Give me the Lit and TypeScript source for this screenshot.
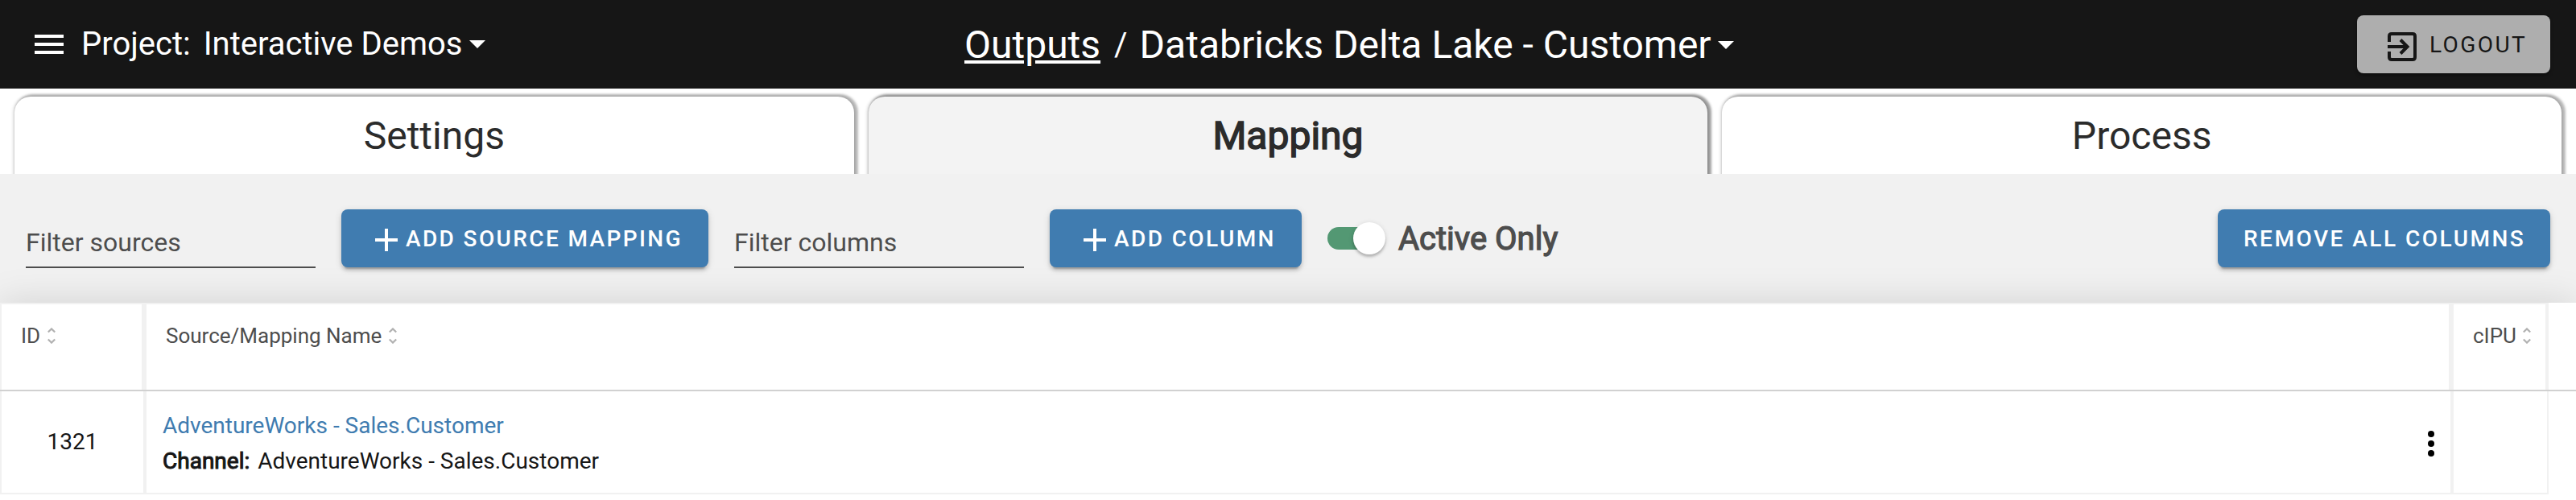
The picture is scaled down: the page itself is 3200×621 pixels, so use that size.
import { LitElement, html, css, svg } from "lit";
import { customElement } from "lit/decorators.js";

const sortIcon = svg`<svg class="sort" width="10" height="20" viewBox="0 0 10 20"><path d="M0.8 5.5L5 1.4L9.2 5.5M0.8 14.5L5 18.6L9.2 14.5" fill="none" stroke="#b1b1b1" stroke-width="2.2"/></svg>`;
const plusIcon = svg`<svg class="plus" width="28" height="28" viewBox="0 0 28 28"><path d="M12 0h4v12h12v4H16v12h-4V16H0v-4h12z" fill="#fff"/></svg>`;
const caret = svg`<svg class="caret" width="20" height="10" viewBox="0 0 20 10"><path d="M0 0h20L10 10z" fill="#fff"/></svg>`;

@customElement("app-root")
export class AppRoot extends LitElement {
  static styles = css`
    :host { display: block; width: 3200px; height: 621px; overflow: hidden; background: #fff; font-family: Roboto, sans-serif; color: #161616; }
    * { box-sizing: border-box; }
    svg { display: block; flex: none; }
    .bar { height: 110px; background: #161616; color: #fff; display: grid; grid-template-columns: 1155px auto 1fr; grid-template-rows: 110px; align-items: center; padding: 0 32px 0 43px; }
    .project { display: flex; align-items: center; font-size: 40px; line-height: 110px; white-space: pre; }
    .project .burger { margin-right: 22px; }
    .project .name { margin-left: 16px; }
    .caret { margin-left: 8px; }
    .crumbs { display: flex; align-items: center; font-size: 48px; line-height: 108px; padding-top: 2px; white-space: pre; }
    .crumbs a { text-decoration: underline; }
    .crumbs .slash { margin: 0 15px 0 17px; font-size: 40px; }
    .logout { justify-self: end; width: 240px; height: 72px; border-radius: 8px; background: #aeaeae; color: #161616; display: flex; align-items: center; padding-left: 38px; font-size: 28px; letter-spacing: 2.4px; box-shadow: 0 3px 4px rgba(0,0,0,.35); }
    .logout svg { margin: 6px 16px 0 0; }
    .tabs { height: 106px; padding: 10px 18px 0; display: grid; grid-template-columns: repeat(3, 1fr); column-gap: 18px; overflow: hidden; }
    .tab { height: 110px; border-radius: 20px 20px 0 0; font-size: 48px; line-height: 98px; text-align: center; color: #2b2b2b; box-shadow: 3px -1px 3px 2px rgba(0,0,0,.25), 0 0 4px 1px rgba(0,0,0,.2); background: #fff; }
    .tab.on { background: #f3f3f3; box-shadow: 3px -1px 3px 2px rgba(0,0,0,.34), 0 0 4px 1px rgba(0,0,0,.26); -webkit-text-stroke: 1.5px #2b2b2b; }
    .tools { height: 160px; background: #f1f1f1; display: flex; padding: 44px 32px 0; }
    .field { width: 360px; height: 73px; border-bottom: 2px solid #4d4d4d; font-size: 32px; line-height: 82px; color: #4d4d4d; }
    .btn { height: 72px; border-radius: 8px; background: #407cb0; color: #fff; font-size: 28px; font-weight: 500; letter-spacing: 2.5px; display: flex; align-items: center; white-space: nowrap; box-shadow: 0 6px 2px -4px rgba(0,0,0,.2), 0 4px 4px rgba(0,0,0,.14), 0 2px 10px rgba(0,0,0,.12); }
    .plus { margin: 4px 10px 0 0; }
    .source { width: 456px; margin: 0 32px; padding-left: 42px; letter-spacing: 2.38px; }
    .column { width: 313px; margin: 0 32px; padding-left: 42px; letter-spacing: 2.4px; }
    .switch { width: 56px; height: 28px; margin: 22px 16px 0 0; display: flex; align-items: center; background: #539873; border-radius: 14px; }
    .knob { flex: none; margin-left: 32px; width: 40px; height: 40px; border-radius: 50%; background: #fff; box-shadow: 0 3px 3px rgba(0,0,0,.2), 0 1px 6px rgba(0,0,0,.12); }
    .active { margin-left: 16px; font-size: 40px; line-height: 74px; -webkit-text-stroke: 1.25px #4d4d4d; color: #4d4d4d; }
    .remove { width: 413px; margin-left: auto; padding-left: 32px; }
    .table { position: relative; height: 245px; box-shadow: 0 0 44px rgba(0,0,0,.13); background: #fff; }
    .head { height: 110px; display: grid; grid-template-columns: 180px 2866px 120px; border-bottom: 2px solid #d1d1d1; font-size: 26px; color: #4d4d4d; }
    .th { display: flex; align-items: flex-start; padding: 24px 0 0 24px; border: 2px solid #f1f1f1; border-bottom: 0; border-right-width: 4px; border-left-width: 2px; line-height: 30px; }
    .sort { margin: 5px 0 0 8.5px; }
    .row { height: 128px; display: grid; grid-template-columns: 180px 2866px 120px; font-size: 28px; }
    .td { border: solid #f1f1f1; border-width: 0 2px 2px 2px; }
    .id { display: flex; align-items: center; justify-content: center; padding-bottom: 2px; }
    .map { display: flex; align-items: center; padding: 4px 20px 0 20px; line-height: 44px; }
    .link { color: #407cb0; }
    .channel b { font-weight: 400; -webkit-text-stroke: 1px #161616; margin-right: 10px; }
    .dots { margin: 0 0 1px auto; }
  `;

  render() {
    return html`
      <header class="bar">
        <div class="project">
          <svg class="burger" width="36" height="24" viewBox="0 0 36 24"><path d="M0 0h36v4H0zM0 10h36v4H0zM0 20h36v4H0z" fill="#fff"/></svg>
          <span>Project:</span><span class="name">Interactive Demos</span>${caret}
        </div>
        <div class="crumbs"><a>Outputs</a><span class="slash">/</span><span>Databricks Delta Lake - Customer</span>${caret}</div>
        <div class="logout">
          <svg width="36" height="36" viewBox="0 0 36 36"><path d="M2 12V5q0-3 3-3h26q3 0 3 3v26q0 3-3 3H5q-3 0-3-3v-7M0 18h24M16 9.5l8.5 8.5l-8.5 8.5" fill="none" stroke="#161616" stroke-width="4"/></svg>
          <span>LOGOUT</span>
        </div>
      </header>
      <nav class="tabs">
        <div class="tab">Settings</div><div class="tab on">Mapping</div><div class="tab">Process</div>
      </nav>
      <section class="tools">
        <div class="field">Filter sources</div>
        <div class="btn source">${plusIcon}<span>ADD SOURCE MAPPING</span></div>
        <div class="field">Filter columns</div>
        <div class="btn column">${plusIcon}<span>ADD COLUMN</span></div>
        <div class="switch"><div class="knob"></div></div>
        <div class="active">Active Only</div>
        <div class="btn remove">REMOVE ALL COLUMNS</div>
      </section>
      <section class="table">
        <div class="head">
          <div class="th"><span>ID</span>${sortIcon}</div>
          <div class="th"><span>Source/Mapping Name</span>${sortIcon}</div>
          <div class="th"><span>cIPU</span>${sortIcon}</div>
        </div>
        <div class="row">
          <div class="td id">1321</div>
          <div class="td map">
            <div>
              <div class="link">AdventureWorks - Sales.Customer</div>
              <div class="channel"><b>Channel:</b>AdventureWorks - Sales.Customer</div>
            </div>
            <svg class="dots" width="8" height="32" viewBox="0 0 8 32"><circle cx="4" cy="4" r="4"/><circle cx="4" cy="16" r="4"/><circle cx="4" cy="28" r="4"/></svg>
          </div>
          <div class="td"></div>
        </div>
      </section>
    `;
  }
}
